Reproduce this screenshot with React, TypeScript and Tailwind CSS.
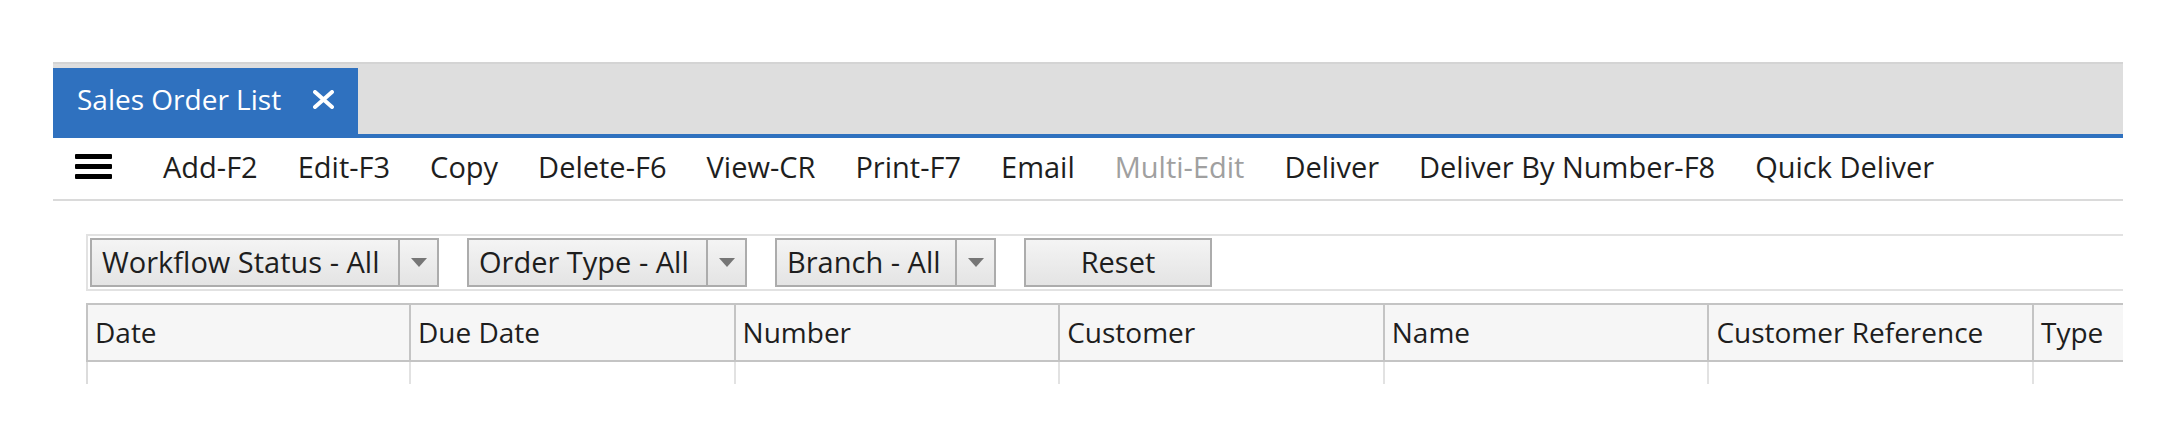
const ACTIONS = [
  { label: 'Add-F2' },
  { label: 'Edit-F3' },
  { label: 'Copy' },
  { label: 'Delete-F6' },
  { label: 'View-CR' },
  { label: 'Print-F7' },
  { label: 'Email' },
  { label: 'Multi-Edit', disabled: true },
  { label: 'Deliver' },
  { label: 'Deliver By Number-F8' },
  { label: 'Quick Deliver' },
];

const COLUMNS = ['Date', 'Due Date', 'Number', 'Customer', 'Name', 'Customer Reference', 'Type', 'Status'];

function Dropdown({ label, width }: { label: string; width: string }) {
  return (
    <div className={`flex h-[49px] border-2 border-[#acacac] bg-gradient-to-b from-[#f4f4f4] to-[#e4e4e4] ${width}`}>
      <div className="flex flex-1 items-center pl-[10px] pb-[2px] whitespace-nowrap">{label}</div>
      <div className="flex w-[39px] items-center justify-center border-l-2 border-[#acacac]">
        <svg width="16" height="9" viewBox="0 0 16 9">
          <path d="M0 0h16L8 9z" fill="#767676" />
        </svg>
      </div>
    </div>
  );
}

export default function App() {
  return (
    <div className="h-[440px] w-[2182px] bg-white pt-[62px] font-['Open_Sans',sans-serif] text-[29px] leading-none text-[#1e1e1e]">
      <div className="ml-[53px] w-[2070px] overflow-hidden">
        {/* tab strip */}
        <div className="flex h-[72px] items-end border-t-2 border-[#d4d4d4] bg-[#dedede]">
          <div className="flex h-[66px] w-[305px] items-center bg-[#2f71bf] pb-[4px] pl-[24px] pr-[24px] text-[28px] text-white">
            <span className="whitespace-nowrap">Sales Order List</span>
            <svg className="ml-auto" width="21" height="19" viewBox="0 0 21 19">
              <path d="M2 2l17 15M19 2L2 17" stroke="white" strokeWidth="4" strokeLinecap="round" />
            </svg>
          </div>
        </div>
        <div className="h-[4px] bg-[#2f71bf]" />

        {/* toolbar */}
        <div className="flex h-[63px] items-center border-b-2 border-[#dadada] pb-[4px] pl-[22px]">
          <div className="flex w-[37px] flex-col gap-[5px]">
            <div className="h-[5px] rounded-[1px] bg-black" />
            <div className="h-[5px] rounded-[1px] bg-black" />
            <div className="h-[5px] rounded-[1px] bg-black" />
          </div>
          <div className="ml-[51px] flex items-center gap-[40px] whitespace-nowrap">
            {ACTIONS.map((a) => (
              <span key={a.label} className={a.disabled ? 'text-[#a0a0a0]' : ''}>
                {a.label}
              </span>
            ))}
          </div>
        </div>

        {/* filters */}
        <div className="ml-[33px] mt-[33px] flex h-[57px] items-center gap-[28px] border-y-2 border-l-2 border-[#e2e2e2] pl-[2px]">
          <Dropdown label="Workflow Status - All" width="w-[349px]" />
          <Dropdown label="Order Type - All" width="w-[280px]" />
          <Dropdown label="Branch - All" width="w-[221px]" />
          <button className="flex h-[49px] w-[188px] items-center justify-center border-2 border-[#acacac] bg-gradient-to-b from-[#f4f4f4] to-[#e4e4e4] pb-[2px]">
            Reset
          </button>
        </div>

        {/* grid */}
        <div className="ml-[33px] mt-[12px]">
          <div className="flex h-[59px] border-y-2 border-l-2 border-[#c4c4c4] bg-[#f6f6f6] text-[28px]">
            {COLUMNS.map((c, i) => (
              <div
                key={c}
                className={`flex shrink-0 items-center border-r-2 border-[#c4c4c4] pb-[2px] pl-[7px] whitespace-nowrap ${i === 0 ? 'w-[323px]' : 'w-[324.6px]'}`}
              >
                {c}
              </div>
            ))}
          </div>
          <div className="flex h-[22px] border-l-2 border-[#dcdcdc]">
            {COLUMNS.map((c, i) => (
              <div key={c} className={`shrink-0 border-r-2 border-[#e2e2e2] ${i === 0 ? 'w-[323px]' : 'w-[324.6px]'}`} />
            ))}
          </div>
        </div>
      </div>
    </div>
  );
}
